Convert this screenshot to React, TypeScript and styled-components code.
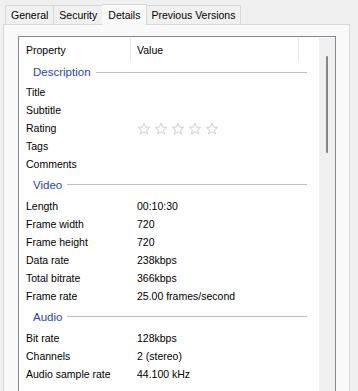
import styled, { createGlobalStyle } from 'styled-components';

const GlobalStyle = createGlobalStyle`
  html, body {
    margin: 0;
    padding: 0;
    background: #f0f0f0;
  }
  #root {
    height: 391px;
    overflow: hidden;
  }
`;

const Window = styled.div`
  font-family: 'Liberation Sans', Arial, sans-serif;
  font-size: 10.5px;
  color: #000;
  height: 391px;
  overflow: hidden;
  background: #f0f0f0;
`;

const TabBar = styled.div`
  display: flex;
  align-items: flex-end;
  height: 24px;
  padding-left: 5px;
`;

const Tab = styled.div<{ $active?: boolean }>`
  height: ${(p) => (p.$active ? 21 : 19)}px;
  box-sizing: border-box;
  display: flex;
  align-items: center;
  padding: 0 ${(p) => (p.$active ? 6 : 5)}px;
  margin: 0 ${(p) => (p.$active ? -1 : 0)}px;
  position: relative;
  z-index: ${(p) => (p.$active ? 2 : 1)};
  background: ${(p) => (p.$active ? '#f9f9f9' : '#f0f0f0')};
  border: 1px solid #d9d9d9;
  border-bottom: none;
  margin-bottom: ${(p) => (p.$active ? -1 : 0)}px;
  padding-bottom: ${(p) => (p.$active ? 1 : 0)}px;
  & + & {
    border-left: none;
  }
`;

const Panel = styled.div`
  margin-left: 3px;
  width: 347px;
  height: 400px;
  box-sizing: border-box;
  background: #f9f9f9;
  border: 1px solid #d9d9d9;
  border-bottom: none;
  padding: 11px 13px 0 14px;
`;

const ListBox = styled.div`
  display: grid;
  grid-template-columns: 1fr 16px;
  height: 380px;
  background: #fff;
  border: 1px solid #828790;
  border-bottom: none;
`;

const Content = styled.div`
  display: flex;
  flex-direction: column;
`;

const HeaderRow = styled.div`
  display: grid;
  grid-template-columns: 112px 168px 1fr;
  height: 24px;
  padding-top: 1px;
  box-sizing: border-box;
`;

const HeaderCell = styled.div<{ $divider?: boolean }>`
  display: flex;
  align-items: center;
  padding-left: ${(p) => (p.$divider ? 7 : 6)}px;
  border-right: ${(p) => (p.$divider ? '1px solid #e5e5e5' : 'none')};
`;

const HeaderEnd = styled.div`
  border-left: 1px solid #e5e5e5;
  margin-left: -1px;
`;

const Group = styled.div<{ $first?: boolean }>`
  display: flex;
  align-items: center;
  gap: 5px;
  height: ${(p) => (p.$first ? 22 : 24)}px;
  padding: 0 12px 0 14px;
  color: #2a43b0;
  font-size: 11.5px;
  padding-bottom: ${(p) => (p.$first ? 0 : 1)}px;
  box-sizing: border-box;
`;

const GroupLine = styled.div`
  flex: 1;
  height: 1px;
  background: #b3bed6;
`;

const Row = styled.div`
  display: grid;
  grid-template-columns: 111px 1fr;
  height: 18px;
  align-items: center;
  padding-left: 7px;
  white-space: nowrap;
`;

const Stars = styled.div`
  display: flex;
  gap: 3px;
  margin-top: 1px;
`;

const ScrollTrack = styled.div`
  display: flex;
  flex-direction: column;
  align-items: center;
  background: #f0f0f0;
  padding-top: 18px;
  margin-top: 1px;
`;

const Thumb = styled.div`
  width: 2px;
  height: 97px;
  border-radius: 1px;
  background: #858585;
`;

const Star = () => (
  <svg width="14" height="14" viewBox="0 0 14 14">
    <path
      d="M7 1.2 L8.6 5.1 L12.7 5.3 L9.5 7.9 L10.6 12 L7 9.7 L3.4 12 L4.5 7.9 L1.3 5.3 L5.4 5.1 Z"
      fill="none"
      stroke="#cacaca"
      strokeWidth="0.9"
      strokeLinejoin="round"
    />
  </svg>
);

type Item = { label: string; value?: string; rating?: boolean };

const sections: { title: string; items: Item[] }[] = [
  {
    title: 'Description',
    items: [
      { label: 'Title' },
      { label: 'Subtitle' },
      { label: 'Rating', rating: true },
      { label: 'Tags' },
      { label: 'Comments' },
    ],
  },
  {
    title: 'Video',
    items: [
      { label: 'Length', value: '00:10:30' },
      { label: 'Frame width', value: '720' },
      { label: 'Frame height', value: '720' },
      { label: 'Data rate', value: '238kbps' },
      { label: 'Total bitrate', value: '366kbps' },
      { label: 'Frame rate', value: '25.00 frames/second' },
    ],
  },
  {
    title: 'Audio',
    items: [
      { label: 'Bit rate', value: '128kbps' },
      { label: 'Channels', value: '2 (stereo)' },
      { label: 'Audio sample rate', value: '44.100 kHz' },
    ],
  },
];

const tabs = ['General', 'Security', 'Details', 'Previous Versions'];

const App = () => {
  return (
    <Window>
      <GlobalStyle />
      <TabBar>
        {tabs.map((t) => (
          <Tab key={t} $active={t === 'Details'}>
            {t}
          </Tab>
        ))}
      </TabBar>
      <Panel>
        <ListBox>
          <Content>
            <HeaderRow>
              <HeaderCell $divider>Property</HeaderCell>
              <HeaderCell>Value</HeaderCell>
              <HeaderEnd />
            </HeaderRow>
            {sections.map((s, i) => (
              <div key={s.title}>
                <Group $first={i === 0}>
                  {s.title}
                  <GroupLine />
                </Group>
                {s.items.map((it) => (
                  <Row key={it.label}>
                    <span>{it.label}</span>
                    {it.rating ? (
                      <Stars>
                        {[0, 1, 2, 3, 4].map((n) => (
                          <Star key={n} />
                        ))}
                      </Stars>
                    ) : (
                      <span>{it.value}</span>
                    )}
                  </Row>
                ))}
              </div>
            ))}
          </Content>
          <ScrollTrack>
            <Thumb />
          </ScrollTrack>
        </ListBox>
      </Panel>
    </Window>
  );
};

export default App;
